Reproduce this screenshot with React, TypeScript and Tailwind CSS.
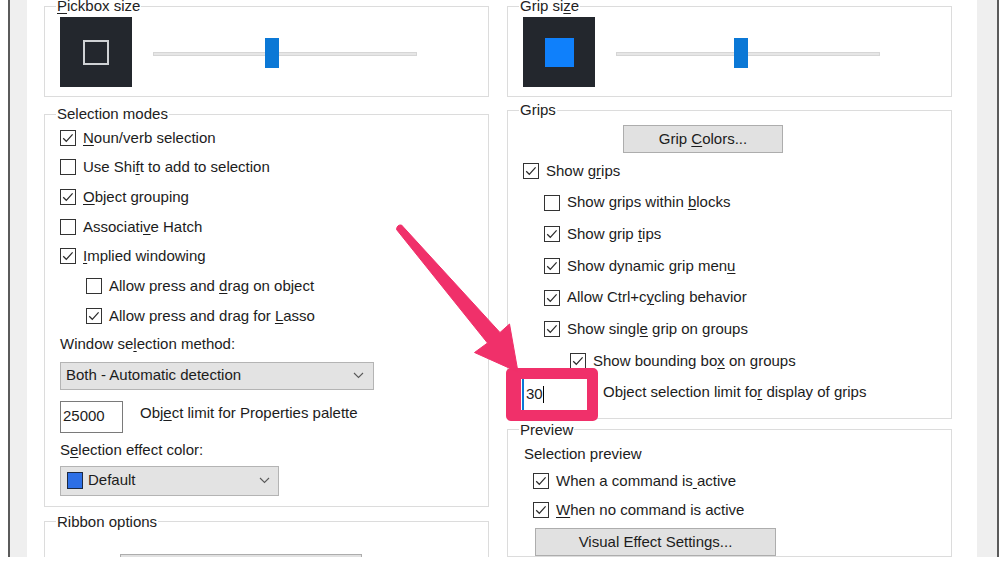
import React from "react";

type LabelProps = { t: string; u: number };

// Renders a caption with its access-key letter underlined.
function Mn({ t, u }: LabelProps) {
  if (u < 0) return <span>{t}</span>;
  return (
    <span className="whitespace-pre">
      {t.slice(0, u)}
      <span className="underline underline-offset-[2px] decoration-[1px]">{t[u]}</span>
      {t.slice(u + 1)}
    </span>
  );
}

function Box({ checked }: { checked: boolean }) {
  return (
    <span className="w-[16px] h-[16px] border border-[#333] bg-white flex items-center justify-center shrink-0">
      {checked && (
        <svg width="14" height="14" viewBox="0 0 14 14">
          <polyline points="2.2,7.2 5.3,10.3 11.6,3.4" fill="none" stroke="#2b2b2b" strokeWidth="1.25" />
        </svg>
      )}
    </span>
  );
}

function CheckRow({ t, u, checked, className }: LabelProps & { checked: boolean; className: string }) {
  return (
    <div className={"flex items-center gap-[7px] " + className}>
      <Box checked={checked} />
      <Mn t={t} u={u} />
    </div>
  );
}

function Chevron() {
  return (
    <svg width="11" height="7" viewBox="0 0 11 7">
      <polyline points="1,1 5.5,5.5 10,1" fill="none" stroke="#5a5a5a" strokeWidth="1.1" />
    </svg>
  );
}

function Legend({ t, u }: LabelProps) {
  return (
    <legend className="ml-[11px] px-[1px] leading-[18px] text-[15px] text-[#222]">
      <Mn t={t} u={u} />
    </legend>
  );
}

function TopLegend({ t, u }: LabelProps) {
  return (
    <legend className="ml-[11px] px-[1px] leading-[14px] text-[15px] text-[#222]">
      <Mn t={t} u={u} />
    </legend>
  );
}

function SizePreview({ grip, thumb }: { grip: boolean; thumb: number }) {
  return (
    <div className="flex items-center pl-[15px] pt-[4px] pb-[9px]">
      <div className="w-[72px] h-[70px] bg-[#23272d] flex items-center justify-center">
        {grip ? (
          <div className="w-[29px] h-[29px] bg-[#0f80fb]" />
        ) : (
          <div className="w-[26px] h-[25px] border-2 border-[#cfd2d4]" />
        )}
      </div>
      <div className="ml-[21px] mt-[3px] relative w-[264px] h-[4px] bg-[#e6e6e6] border border-[#d6d6d6]">
        <div
          className="absolute top-[-15px] w-[14px] h-[30px] bg-[#0b78d6]"
          style={{ left: thumb }}
        />
      </div>
    </div>
  );
}

export default function App() {
  return (
    <div className="relative w-[1000px] h-[563px] bg-white overflow-hidden font-['Liberation_Sans',Arial,sans-serif] text-[15px] text-[#1c1c1c]">
      <div className="flex h-[557px] pl-[8px]">
        <div className="w-[2px] bg-[#5b5b5b]" />
        <div className="w-[17px] bg-[#efefef]" />
        <div className="w-[950px] flex gap-[18px] pl-[17px] pr-[25px] overflow-hidden">
          {/* left column */}
          <div className="w-[445px] flex flex-col shrink-0">
            <fieldset className="border border-[#dcdcdc] mt-[-1px]">
              <TopLegend t="Pickbox size" u={0} />
              <SizePreview grip={false} thumb={111} />
            </fieldset>

            <fieldset className="border border-[#dcdcdc] mt-[8px]">
              <Legend t="Selection modes" u={-1} />
              <div className="pl-[15px] pb-[10px]">
                <CheckRow className="h-[29.67px]" checked t="Noun/verb selection" u={0} />
                <CheckRow className="h-[29.67px]" checked={false} t="Use Shift to add to selection" u={7} />
                <CheckRow className="h-[29.67px]" checked t="Object grouping" u={0} />
                <CheckRow className="h-[29.67px]" checked={false} t="Associative Hatch" u={9} />
                <CheckRow className="h-[29.67px]" checked t="Implied windowing" u={0} />
                <CheckRow className="h-[29.67px] pl-[26px]" checked={false} t="Allow press and drag on object" u={16} />
                <CheckRow className="h-[29.67px] pl-[26px]" checked t="Allow press and drag for Lasso" u={25} />
                <div className="mt-[4px] leading-[18px]">
                  <Mn t="Window selection method:" u={9} />
                </div>
                <div className="mt-[9px] w-[314px] h-[28px] bg-[#e3e3e3] border border-[#b4b4b4] flex items-center justify-between pl-[5px] pr-[9px]">
                  <span>Both - Automatic detection</span>
                  <Chevron />
                </div>
                <div className="mt-[11px] flex items-center gap-[17px]">
                  <div className="w-[63px] h-[32px] border border-[#7a7a7a] flex items-center pl-[2px]">25000</div>
                  <span className="mt-[-6px]">
                    <Mn t="Object limit for Properties palette" u={3} />
                  </span>
                </div>
                <div className="mt-[8px] leading-[18px]">
                  <Mn t="Selection effect color:" u={1} />
                </div>
                <div className="mt-[7px] w-[219px] h-[30px] bg-[#e3e3e3] border border-[#b4b4b4] flex items-center pl-[6px] pr-[8px]">
                  <span className="w-[16px] h-[17px] bg-[#2d6fe6] border border-[#1e2a40]" />
                  <span className="ml-[5px] flex-1">Default</span>
                  <Chevron />
                </div>
              </div>
            </fieldset>

            <fieldset className="border border-[#dcdcdc] mt-[6px] h-[60px]">
              <Legend t="Ribbon options" u={-1} />
              <div className="mt-[23px] ml-[75px] w-[242px] h-[28px] bg-[#e1e1e1] border border-[#adadad]" />
            </fieldset>
          </div>

          {/* right column */}
          <div className="w-[445px] flex flex-col shrink-0">
            <fieldset className="border border-[#dcdcdc] mt-[-1px]">
              <TopLegend t="Grip size" u={7} />
              <SizePreview grip thumb={117} />
            </fieldset>

            <fieldset className="border border-[#dcdcdc] mt-[4px]">
              <Legend t="Grips" u={-1} />
              <div className="pl-[15px] pb-[8px]">
                <div className="mt-[6px] ml-[100px] w-[160px] h-[28px] bg-[#e1e1e1] border border-[#adadad] flex items-center justify-center">
                  <Mn t="Grip Colors..." u={5} />
                </div>
                <CheckRow className="h-[31.7px] mt-[2px]" checked t="Show grips" u={6} />
                <CheckRow className="h-[31.7px] pl-[21px]" checked={false} t="Show grips within blocks" u={18} />
                <CheckRow className="h-[31.7px] pl-[21px]" checked t="Show grip tips" u={10} />
                <CheckRow className="h-[31.7px] pl-[21px]" checked t="Show dynamic grip menu" u={21} />
                <CheckRow className="h-[31.7px] pl-[21px]" checked t="Allow Ctrl+cycling behavior" u={12} />
                <CheckRow className="h-[31.7px] pl-[21px]" checked t="Show single grip on groups" u={10} />
                <CheckRow className="h-[31.7px] pl-[47px]" checked t="Show bounding box on groups" u={16} />
                <div className="mt-[2px] ml-[-1px] flex items-center gap-[17px]">
                  <div className="relative w-[64px] h-[31px] bg-white border-l-2 border-[#0b78d6] flex items-center pl-[2px]">
                    <span>30</span>
                    <span className="w-[1px] h-[17px] bg-black" />
                    {/* highlight frame drawn around the focused field */}
                    <div className="absolute left-[-18px] top-[-11px] w-[92px] h-[53px] rounded-[5px] border-[11px] border-l-[15px] border-[#f0306a]" />
                  </div>
                  <span className="mt-[-4px]">
                    <Mn t="Object selection limit for display of grips" u={25} />
                  </span>
                </div>
              </div>
            </fieldset>

            <fieldset className="border border-[#dcdcdc] mt-[2px] h-[140px]">
              <Legend t="Preview" u={-1} />
              <div className="pl-[16px]">
                <div className="mt-[6px] leading-[18px]">Selection preview</div>
                <div className="mt-[3.5px] pl-[9px]">
                  <CheckRow className="h-[29px]" checked t="When a command is active" u={17} />
                  <CheckRow className="h-[29px]" checked t="When no command is active" u={0} />
                </div>
                <div className="mt-[3.5px] ml-[11px] w-[241px] h-[28px] bg-[#e1e1e1] border border-[#adadad] flex items-center justify-center">
                  <Mn t="Visual Effect Settings..." u={20} />
                </div>
              </div>
            </fieldset>
          </div>
        </div>
        <div className="w-[20px] bg-[#efefef]" />
        <div className="w-[2px] bg-[#5b5b5b]" />
      </div>

      {/* callout arrow pointing at the grip limit field */}
      <svg className="absolute left-0 top-0 pointer-events-none" width="1000" height="563" viewBox="0 0 1000 563">
        <path
          d="M396.5 229.5 Q397 224.5 401.5 225 L500 332.5 L509.5 324 L518 372 L474.5 352.5 L487.5 343 Z"
          fill="#f0306a"
          stroke="#f0306a"
          strokeWidth="1"
          strokeLinejoin="round"
        />
      </svg>
    </div>
  );
}
